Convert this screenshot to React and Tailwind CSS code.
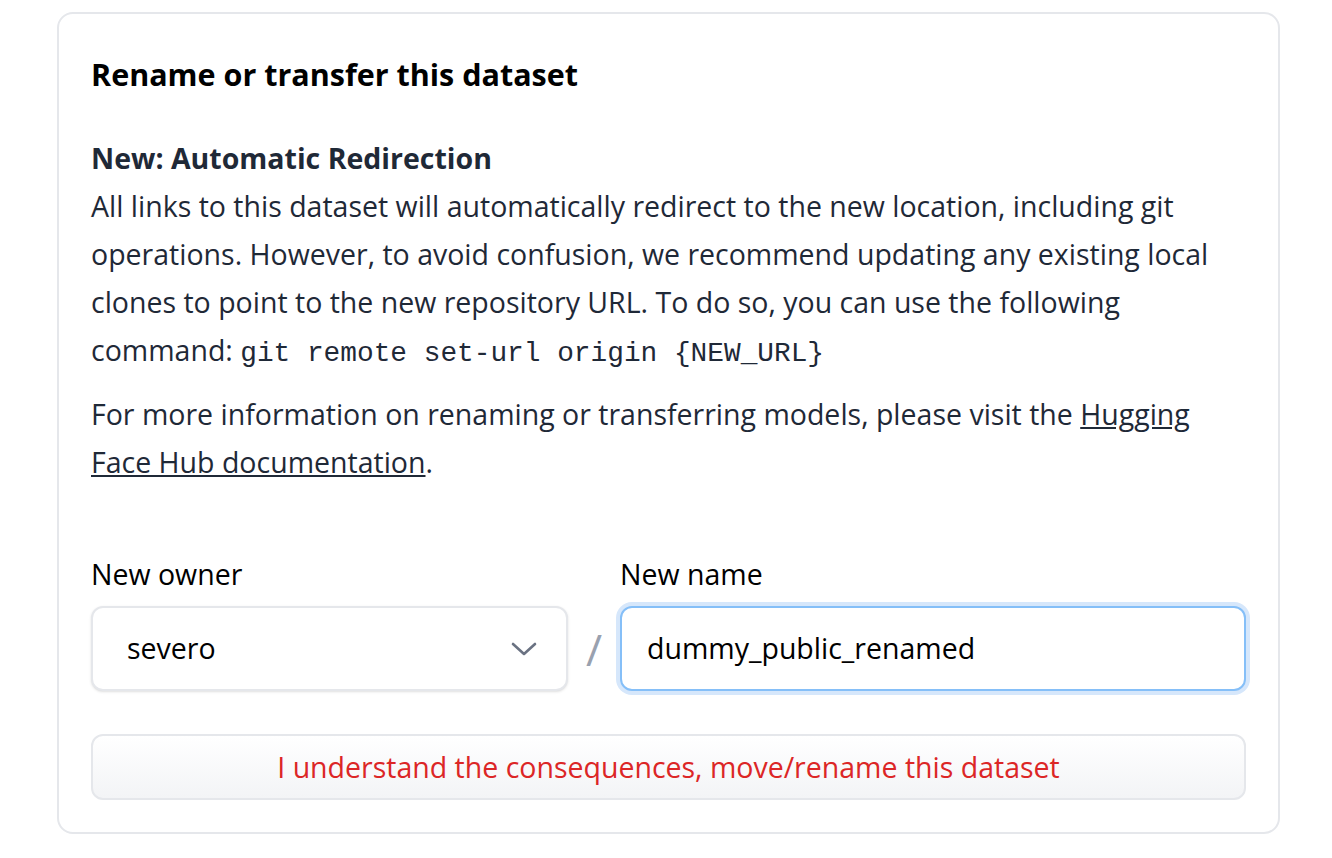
import React from "react";

function Chevron() {
    return (
        <svg width="26" height="16" viewBox="0 0 26 16" fill="none" stroke="currentColor" strokeWidth="2.6" strokeLinecap="round" strokeLinejoin="round">
            <path d="M2 3l11 10 11-10" />
        </svg>
    );
}

export default function App() {
    return (
        <div className="min-h-[858px] bg-white pt-3 font-['Open_Sans',sans-serif] text-[28.5px]">
            <div className="ml-[57px] w-[1223px] rounded-2xl border-2 border-gray-200 px-8 pt-9 pb-8">
                <h2 className="font-bold text-black leading-[48px] text-[30.5px]">Rename or transfer this dataset</h2>

                <div className="mt-9 text-[#1f2937] leading-[48px]">
                    <p className="font-bold">New: Automatic Redirection</p>
                    <p>
                        All links to this dataset will automatically redirect to the new location, including git operations. However, to avoid confusion, we recommend updating any existing local clones to point to the new repository URL. To do so, you can use the following command: <code className="font-['Liberation_Mono',monospace] text-[27.8px] leading-none">git remote set-url origin {"{NEW_URL}"}</code>
                    </p>
                    <p className="mt-4">
                        For more information on renaming or transferring models, please visit the <a className="underline">Hugging Face Hub documentation</a>.
                    </p>
                </div>

                <div className="mt-16 flex items-end">
                    <div className="w-[477px]">
                        <div className="leading-[48px] text-black mb-2">New owner</div>
                        <div className="flex h-[85px] items-center justify-between rounded-xl border-2 border-gray-200 bg-white pl-[34px] pr-[29px] shadow-sm text-black">
                            <span>severo</span>
                            <span className="text-gray-500"><Chevron /></span>
                        </div>
                    </div>
                    <div className="flex h-[85px] w-[52px] items-center justify-center text-[44px] text-gray-400">/</div>
                    <div className="flex-1">
                        <div className="leading-[48px] text-black mb-2">New name</div>
                        <div className="flex h-[85px] items-center rounded-xl border-2 border-[#85bff8] bg-white pl-[25px] ring-4 ring-[#d6e7fb] text-black">
                            dummy_public_renamed
                        </div>
                    </div>
                </div>

                <button className="mt-[43px] flex h-[66px] w-full items-center justify-center rounded-xl border-2 border-gray-200 bg-gradient-to-b from-white to-gray-100 text-[#dc2626]">
                    I understand the consequences, move/rename this dataset
                </button>
            </div>
        </div>
    );
}
